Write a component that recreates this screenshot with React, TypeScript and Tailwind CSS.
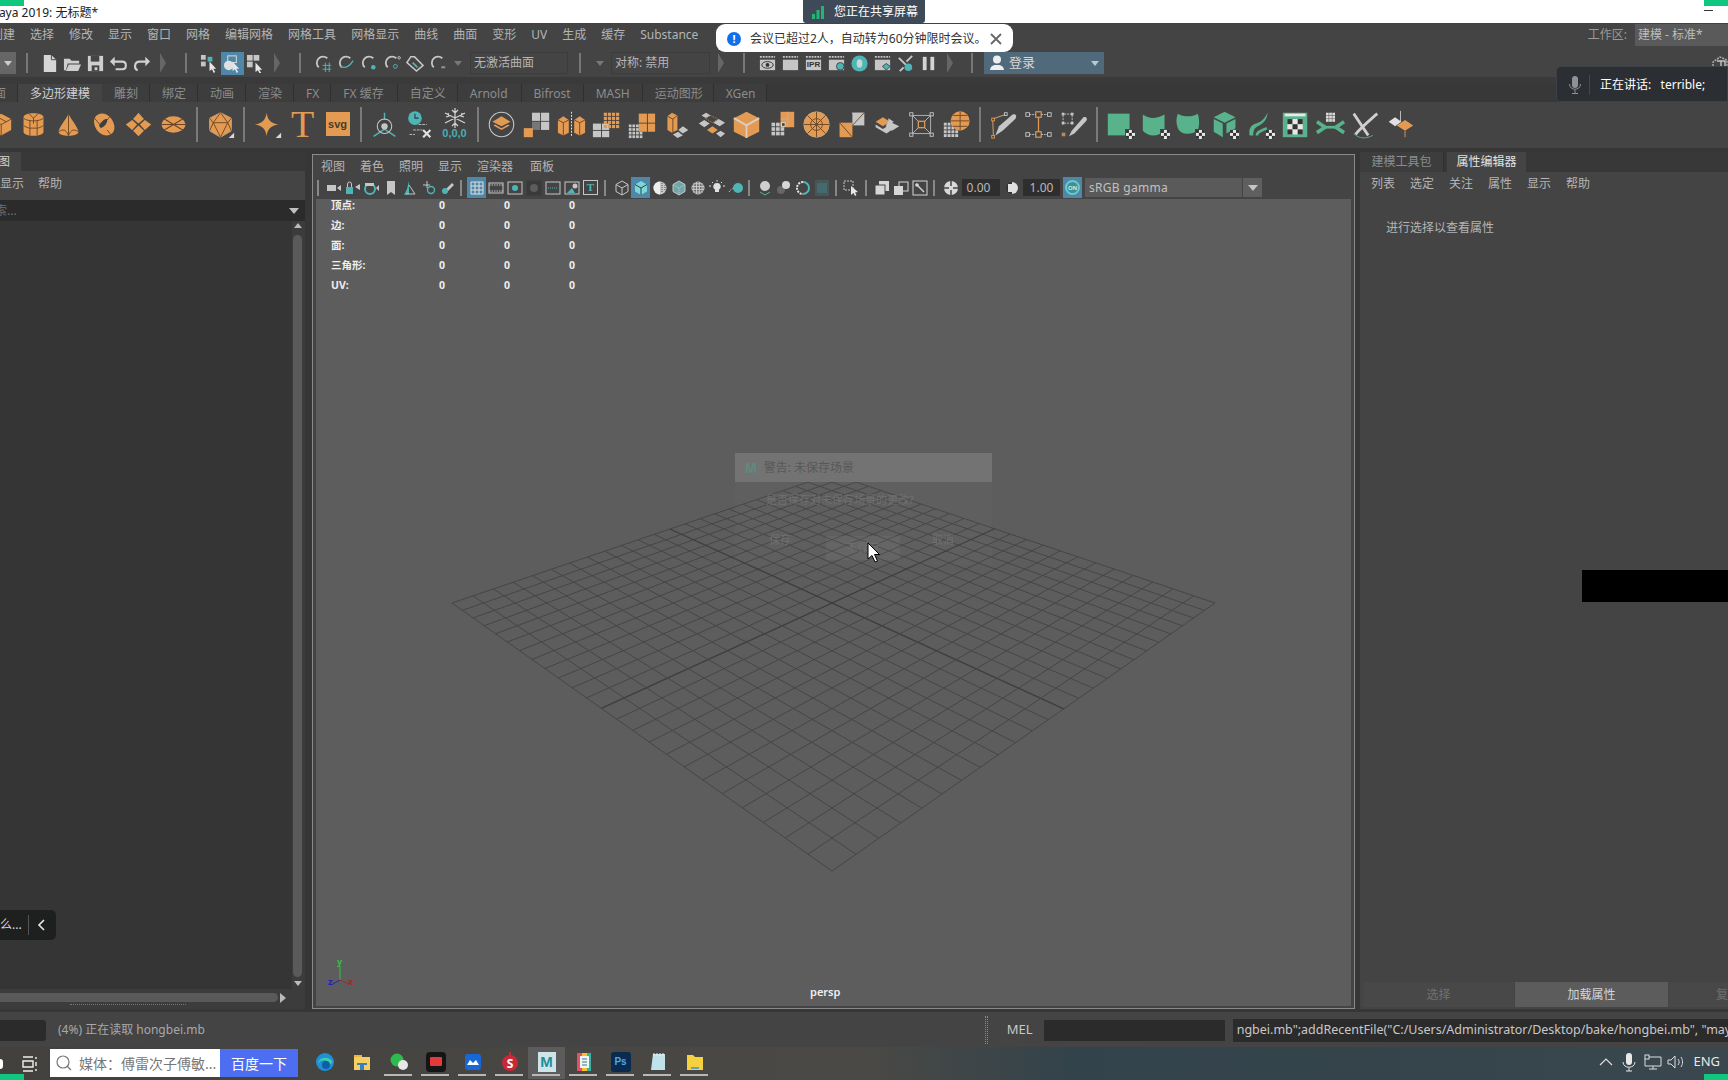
import React from "react";

const O = "#e39a52";
const D = "#6b4423";
const G = "#c6c6c6";
const T = "#4fb4b6";
const N = "#58b28c";

type P = { children?: React.ReactNode; s?: number };
const S = ({ children, s = 29 }: P) => (
  <svg width={s} height={s} viewBox="0 0 32 32" className="block">
    {children}
  </svg>
);
const Corner = () => <polygon points="31,31 31,25 25,31" fill="#d8d8d8" />;
const Chk = ({ x = 22, y = 22 }: { x?: number; y?: number }) => (
  <g>
    <rect x={x} y={y} width="10" height="10" fill="#e8e8e8" />
    <rect x={x} y={y} width="3.3" height="3.3" fill="#333" />
    <rect x={x + 6.6} y={y} width="3.3" height="3.3" fill="#333" />
    <rect x={x + 3.3} y={y + 3.3} width="3.3" height="3.3" fill="#333" />
    <rect x={x} y={y + 6.6} width="3.3" height="3.3" fill="#333" />
    <rect x={x + 6.6} y={y + 6.6} width="3.3" height="3.3" fill="#333" />
  </g>
);
const DGrid = ({ x, y, n, c, size = 3, gap = 1 }: { x: number; y: number; n: number; c: string; size?: number; gap?: number }) => (
  <g fill={c}>
    {Array.from({ length: n * n }).map((_, i) => (
      <rect key={i} x={x + (i % n) * (size + gap)} y={y + Math.floor(i / n) * (size + gap)} width={size} height={size} />
    ))}
  </g>
);

const shelfA: React.ReactNode[] = [
  <S key="cube"><polygon points="19,4 30,10 30,22 19,28 8,22 8,10" fill={O} /><path d="M8 10l11 6 11-6M19 16v12M13.5 7l11 6M13 13v12" stroke={D} strokeWidth="1" fill="none" /></S>,
  <S key="cyl"><path d="M5 8c0-6 22-6 22 0v16c0 6-22 6-22 0z" fill={O} /><path d="M5 9c4 4 18 4 22 0M11 4l5 5 5-5M16 9v6M5 17c4 3 7 3 7 3v8M27 17c-4 3-7 3-7 3v8M12 11v9M20 11v9M12 20h8" stroke={D} strokeWidth="1" fill="none" /></S>,
  <S key="cone"><path d="M16 4C12 12 6 18 5 24c0 6 22 6 22 0-1-6-7-12-11-20z" fill={O} /><path d="M16 4v24M5 24c5-3 8-3 11 4 3-7 6-7 11-4" stroke={D} strokeWidth="1" fill="none" /></S>,
  <S key="torus"><path d="M10 5c8-4 17 4 18 13 1 9-8 13-15 8C6 22 2 9 10 5z" fill={O} /><path d="M11 17c3-5 7-8 9-7 1 5-4 9-7 10z" fill="#3f3f3f" /><path d="M6 9l6 7M20 22l4 5M24 6l-4 5" stroke={D} strokeWidth="1" /></S>,
  <S key="plane"><polygon points="16,3 22,10 16,15 10,10" fill={O} /><polygon points="23,11 30,16 23,22 17.5,16" fill={O} /><polygon points="9,11 14.5,16 9,22 2,16" fill={O} /><polygon points="16,17 22,23 16,29 10,23" fill={O} /></S>,
  <S key="disk"><ellipse cx="16" cy="16" rx="13" ry="9" fill={O} /><path d="M6 10l20 12M26 10L6 22M3 16h26" stroke={D} strokeWidth="1.2" /></S>,
];
const shelfB = (
  <S key="plat"><polygon points="16,3 28,9 28,23 16,30 4,23 4,9" fill={O} stroke="#caa27a" strokeWidth="1" /><path d="M16 3l8 11H8zM4 9l4 5-4 9M28 9l-4 5 4 9M8 14l8 16 8-16" stroke={D} strokeWidth="1" fill="none" /><Corner /></S>
);
const shelfC: React.ReactNode[] = [
  <S key="star"><path d="M15 3c1 8 5 12 13 13-8 1-12 5-13 13-1-8-5-12-13-13 8-1 12-5 13-13z" fill={O} /><Corner /></S>,
  <span key="T" className="[font-family:'Liberation_Serif',serif] text-[38px] leading-none text-[#e39a52]">T</span>,
  <span key="svg" className="flex h-[24px] w-[24px] items-center justify-center bg-[#e39a52] text-[11px] font-bold leading-none text-[#4a3a2a] [font-family:'Liberation_Sans',sans-serif]">svg</span>,
];
const shelfD: React.ReactNode[] = [
  <S key="piv"><path d="M16 3v8M16 21l-12 8M16 21l12 8" stroke={T} strokeWidth="1.6" /><circle cx="16" cy="18" r="8" fill="none" stroke={G} strokeWidth="1.2" /><circle cx="16" cy="18" r="3.5" fill={G} /></S>,
  <S key="clk"><circle cx="11" cy="9" r="7.5" fill={T} /><path d="M11 4v5h4" stroke="#333" strokeWidth="1.2" fill="none" /><path d="M15 16h9M9 22h10M5 27h6" stroke={G} strokeWidth="1" strokeDasharray="3 1" /><path d="M20 22l8 8M28 22l-8 8" stroke="#e0e0e0" strokeWidth="2.4" /></S>,
  <div key="snow" className="relative flex h-[32px] w-[36px] flex-col items-center">
    <svg width="24" height="20" viewBox="0 0 24 20" className="block"><path d="M12 0v20M2 5l20 10M22 5L2 15M9 2l3 3 3-3M9 18l3-3 3 3M3 9l3-1-1-3M21 9l-3-1 1-3" stroke="#d4d4d4" strokeWidth="1.2" fill="none" /></svg>
    <span className="text-[11px] font-bold leading-[11px] text-[#46b0b4] [font-family:'Liberation_Sans',sans-serif]">0,0,0</span>
  </div>,
];
const shelfE: React.ReactNode[] = [
  <S key="e1"><circle cx="16" cy="16" r="13.5" fill="none" stroke={G} strokeWidth="1.2" /><polygon points="16,7 26,13 16,18 6,13" fill={O} /><path d="M7 17l9 5 9-5-2-1-7 4-7-4z" fill={O} /></S>,
  <S key="e2"><rect x="11" y="3" width="9" height="9" fill={G} /><rect x="21" y="3" width="9" height="9" fill={G} /><rect x="21" y="13" width="9" height="9" fill={G} /><rect x="11" y="13" width="9" height="9" fill="#777" /><rect x="2" y="20" width="10" height="10" fill={O} /></S>,
  <S key="e3"><path d="M1 11l6-4 6 4v14l-6 3-6-3z" fill={O} /><path d="M19 11l6-4 6 4v14l-6 3-6-3z" fill={O} /><path d="M1 11l6 3 6-3M7 14v14M19 11l6 3 6-3M25 14v14" stroke={D} strokeWidth="1" fill="none" /><path d="M16 2v28" stroke="#dff" strokeWidth="1" strokeDasharray="2 1.5" /></S>,
  <S key="e4"><rect x="1" y="15" width="9" height="7" fill={G} /><rect x="11" y="15" width="8" height="7" fill={G} /><rect x="1" y="23" width="9" height="7" fill={G} /><rect x="11" y="23" width="8" height="7" fill={G} /><DGrid x={13} y={3} n={4} c={O} size={3.5} gap={1} /></S>,
  <S key="e5"><DGrid x={2} y={16} n={4} c={G} size={3} gap={1} /><rect x="13" y="4" width="9" height="10" fill={O} /><rect x="23" y="4" width="8" height="10" fill={O} /><rect x="23" y="15" width="8" height="9" fill={O} /><rect x="13" y="15" width="9" height="9" fill={O} /></S>,
  <S key="e6"><path d="M6 7l5-4 6 3v16l-6 3-5-3z" fill={O} /><path d="M6 7l6 3 5-4M12 10v15" stroke={D} strokeWidth="1" fill="none" /><polygon points="18,22 23,18 29,22 23,26" fill={G} /><polygon points="12,27 18,24 23,28 17,31" fill={G} /></S>,
  <S key="e7"><polygon points="5,6 10,3 15,6 10,9" fill={G} /><polygon points="18,14 24,10 31,14 25,18" fill={G} /><polygon points="2,15 8,11 14,15 8,19" fill={G} /><polygon points="11,22 17,18 23,22 17,26" fill={O} /><polygon points="21,26 26,23 31,26 26,30" fill={G} /><polygon points="9,9 15,6 23,10 17,14" fill="none" stroke="#a08050" strokeDasharray="2 1" /></S>,
  <S key="e8"><polygon points="16,2 30,9 30,24 16,31 2,24 2,9" fill={O} /><path d="M2 9l14 8 14-8M16 17v14" stroke="#d8d0c4" strokeWidth="2" fill="none" /></S>,
  <S key="e9"><rect x="15" y="2" width="15" height="17" fill={O} /><path d="M15 10h8v-8M23 10v9" stroke="#caa" strokeWidth="1" fill="none" /><DGrid x={5} y={14} n={3} c={G} size={4} gap={1} /><rect x="16" y="14" width="4" height="4" fill="#444" stroke="#ddd" /></S>,
  <S key="e10"><circle cx="16" cy="16" r="14" fill={O} stroke="#cda278" /><circle cx="16" cy="16" r="6.5" fill="none" stroke={D} /><path d="M16 2v28M2 16h28M6 6l20 20M26 6L6 26" stroke={D} strokeWidth="1" /></S>,
  <S key="e11"><polygon points="16,3 30,3 30,17" fill={G} /><polygon points="3,15 15,15 15,29 3,29" fill={O} /><rect x="3" y="14" width="14" height="16" fill={O} /><rect x="17" y="3" width="13" height="14" fill={G} /><path d="M3 14l14 16M17 17l13-14" stroke={D} strokeWidth="1" /></S>,
  <S key="e12"><polygon points="12,8 20,13 12,18 4,13" fill={O} /><polygon points="18,9 24,13 18,17" fill={G} /><polygon points="4,16 12,21 20,16 26,19 16,26 4,19" fill={G} /><polygon points="18,12 30,18 22,23 15,18" fill={G} /></S>,
  <S key="e13"><path d="M5 5l22 22M27 5L5 27M5 6h22M6 5v22M26 5v22M5 26h22" stroke={G} strokeWidth="0.9" /><g fill="#444" stroke={G}><rect x="3" y="3" width="3.5" height="3.5" /><rect x="25.5" y="3" width="3.5" height="3.5" /><rect x="3" y="25.5" width="3.5" height="3.5" /><rect x="25.5" y="25.5" width="3.5" height="3.5" /></g><rect x="12.5" y="12.5" width="7" height="7" fill="#444" stroke={O} strokeWidth="1.4" /></S>,
  <S key="e14"><DGrid x={2} y={14} n={4} c={G} size={3.2} gap={1} /><circle cx="20" cy="12" r="10.5" fill={O} /><path d="M20 2v20M10 12h20M12 6h16M12 18h16" stroke={D} strokeWidth="1" /></S>,
];
const shelfF: React.ReactNode[] = [
  <S key="f1"><path d="M4 10l14-5M4 10l1 20" stroke="#c9975d" strokeWidth="1.2" /><rect x="3" y="9" width="3" height="3" fill="#444" stroke={O} /><rect x="17" y="3" width="3" height="3" fill="#444" stroke={G} /><rect x="3" y="28" width="3" height="3" fill="#444" stroke={O} /><path d="M7 28l4-10L26 5c4-1 5 2 3 5L15 23z" fill={G} /></S>,
  <S key="f2"><g fill="#444" stroke={G}><rect x="2" y="3" width="4" height="4" /><rect x="26" y="3" width="4" height="4" /><rect x="2" y="25" width="4" height="4" /><rect x="26" y="25" width="4" height="4" /></g><rect x="13" y="2" width="6" height="6" fill="#444" stroke={O} strokeWidth="1.3" /><rect x="13" y="24" width="6" height="6" fill="#444" stroke={O} strokeWidth="1.3" /><path d="M16 8v16" stroke={O} strokeWidth="1.4" /><path d="M6 5h7M19 5h7M6 27h7M19 27h7" stroke={G} strokeDasharray="2 1" /></S>,
  <S key="f3"><g fill={G}><rect x="3" y="3" width="3" height="3" /><rect x="13" y="3" width="3" height="3" /><rect x="3" y="13" width="3" height="3" /><rect x="13" y="13" width="3" height="3" /></g><path d="M6 4.5h7M6 14.5h7M4.5 6v7M14.5 6v7" stroke={G} strokeDasharray="2 1" /><rect x="3" y="25" width="4" height="4" fill="#b88a5c" /><path d="M11 29l3-6 13-15c3-1 5 2 3 4L17 26z" fill={G} /></S>,
];
const shelfG: React.ReactNode[] = [
  <S key="g1"><rect x="2" y="4" width="24" height="24" fill={N} /><rect x="21" y="21" width="12" height="11" fill="#3f3f3f" /><Chk /></S>,
  <S key="g2"><path d="M2 5c7 5 15 5 24 0v18c-7 7-18 7-24 0z" fill={N} /><rect x="21" y="21" width="12" height="11" fill="#3f3f3f" /><Chk /></S>,
  <S key="g3"><path d="M2 4c7 4 15 4 22 0 2 6 2 14 0 18-7 6-18 6-22-2-2-6-2-11 0-16z" fill={N} /><rect x="21" y="21" width="12" height="11" fill="#3f3f3f" /><Chk /></S>,
  <S key="g4"><polygon points="15,2 27,8 15,14 3,8" fill={N} /><polygon points="3,10 13,15 13,30 3,24" fill={N} /><polygon points="17,15 27,10 27,20 17,26" fill={N} /><Chk y={22} x={21} /></S>,
  <S key="g5"><path d="M4 28C2 14 12 16 17 12c4-3 5-6 7-9-1 8-5 12-11 15-4 2-5 5-5 10z" fill={N} /><path d="M12 28c0-4 5-5 11-8" stroke={N} strokeWidth="3" fill="none" /><Chk /></S>,
  <S key="g6"><rect x="2" y="3" width="27" height="27" fill={N} /><rect x="4" y="4" width="23" height="3" fill="#e8e8e8" /><g fill="#e8e8e8"><rect x="7" y="10" width="17" height="17" /></g><g fill="#333"><rect x="7" y="10" width="5.6" height="5.6" /><rect x="18.4" y="10" width="5.6" height="5.6" /><rect x="12.7" y="15.7" width="5.6" height="5.6" /><rect x="7" y="21.4" width="5.6" height="5.6" /><rect x="18.4" y="21.4" width="5.6" height="5.6" /></g></S>,
  <S key="g7"><DGrid x={11} y={3} n={3} c="#d8d8d8" size={3} gap={0.5} /><path d="M1 13l9 6-9 6M31 13l-9 6 9 6" stroke={N} strokeWidth="4" fill="none" /><path d="M10 19h12" stroke={N} strokeWidth="3" /></S>,
  <S key="g8"><path d="M3 4l16 24M29 4C20 12 10 20 5 27" stroke="#cfcfcf" strokeWidth="3" /><path d="M3 26c6 6 14 6 21 2" stroke={N} strokeWidth="1" fill="none" /></S>,
  <S key="g9"><path d="M16 1v12" stroke={G} strokeWidth="1" /><polygon points="10,8 17,13 10,18 3,13" fill="#e0e0e0" /><polygon points="21,11 30,17 21,23 12,17" fill={O} /><path d="M21 23v7" stroke={O} /></S>,
];

const Sep = () => <div className="h-[35px] w-[2px] bg-[#7a7a7a]" />;
const Cell = ({ children }: { children: React.ReactNode }) => (
  <div className="flex h-[36px] w-[35px] shrink-0 items-center justify-center">{children}</div>
);
const ShelfSep = () => (
  <div className="flex w-[12px] shrink-0 justify-center"><Sep /></div>
);

// top toolbar
const I = ({ children, active }: { children: React.ReactNode; active?: boolean }) => (
  <div className={active ? "flex h-[23px] w-[23px] shrink-0 items-center justify-center bg-[#4f87a8]" : "flex h-[23px] w-[23px] shrink-0 items-center justify-center"}>
    <svg width="19" height="19" viewBox="0 0 20 20" className="block">{children}</svg>
  </div>
);
const Arrow = ({ x = 10, y = 8 }: { x?: number; y?: number }) => (
  <polygon transform={`translate(${x} ${y})`} points="0,0 0,10 2.5,8 4.5,12 6,11 4,7.5 7,7.5" fill="#e6e6e6" />
);
const Mag = ({ children }: { children?: React.ReactNode }) => (
  <I>
    <path d="M14 4.5A6.5 6.5 0 1 0 5 14" stroke={G} strokeWidth="1.9" fill="none" />
    {children}
  </I>
);
const RBase = ({ children }: { children?: React.ReactNode }) => (
  <g>
    <path d="M2 3h16" stroke={G} strokeWidth="2" strokeDasharray="2 1" />
    <rect x="2" y="6" width="16" height="11" fill={G} />
    {children}
  </g>
);
const TbSep = ({ cls }: { cls: string }) => <div className={cls} />;
const Tri = ({ cls }: { cls: string }) => (
  <svg width="6" height="20" viewBox="0 0 6 20" className={cls}><path d="M0 0l6 10-6 10z" fill="#666" /></svg>
);
const Field = ({ cls, text }: { cls: string; text: string }) => (
  <div className={cls}>{text}</div>
);

const menus = ["创建", "选择", "修改", "显示", "窗口", "网格", "编辑网格", "网格工具", "网格显示", "曲线", "曲面", "变形", "UV", "生成", "缓存", "Substance"];
const tabs: [string, string][] = [
  ["曲面", "pr-[11px]"],
  ["多边形建模", ""],
  ["雕刻", "pr-[11px]"],
  ["绑定", "pr-[11px]"],
  ["动画", "pr-[11px]"],
  ["渲染", "pr-[11px]"],
  ["FX", "pr-[11px]"],
  ["FX 缓存", "pr-[13px]"],
  ["自定义", "pr-[11px]"],
  ["Arnold", "pr-[13px]"],
  ["Bifrost", "pr-[12px]"],
  ["MASH", "pr-[12px]"],
  ["运动图形", "pr-[10px]"],
  ["XGen", "pr-[11px]"],
];

// viewport toolbar
const V = ({ children, active, cls }: { children: React.ReactNode; active?: boolean; cls?: string }) => (
  <div className={(active ? "bg-[#4f87a8] " : "") + "flex h-[21px] w-[19px] shrink-0 items-center justify-center " + (cls ?? "")}>
    <svg width="16" height="16" viewBox="0 0 16 16" className="block">{children}</svg>
  </div>
);
const VSep = ({ cls }: { cls: string }) => <div className={cls} />;

// perspective grid
const quad = { t: [832, 474], r: [1215, 603], b: [832, 871], l: [452, 603] };
function makeMap() {
  const [x0, y0] = quad.t, [x1, y1] = quad.r, [x2, y2] = quad.b, [x3, y3] = quad.l;
  const dx1 = x1 - x2, dx2 = x3 - x2, sx = x0 - x1 + x2 - x3;
  const dy1 = y1 - y2, dy2 = y3 - y2, sy = y0 - y1 + y2 - y3;
  const den = dx1 * dy2 - dx2 * dy1;
  const g = (sx * dy2 - dx2 * sy) / den, h = (dx1 * sy - sx * dy1) / den;
  const a = x1 - x0 + g * x1, b = x3 - x0 + h * x3, d = y1 - y0 + g * y1, e = y3 - y0 + h * y3;
  return (u: number, v: number) => {
    const w = g * u + h * v + 1;
    return [(a * u + b * v + x0) / w, (d * u + e * v + y0) / w];
  };
}
const Grid = () => {
  const m = makeMap();
  const n = 24;
  const lines: React.ReactNode[] = [];
  for (let i = 0; i <= n; i++) {
    const t = i / n;
    const c = i === n / 2;
    const [a1, a2] = m(t, 0), [b1, b2] = m(t, 1), [c1, c2] = m(0, t), [d1, d2] = m(1, t);
    lines.push(<line key={"a" + i} x1={a1} y1={a2} x2={b1} y2={b2} stroke={c ? "#3e3e3e" : "#464646"} strokeWidth={c ? 1.3 : 1} />);
    lines.push(<line key={"b" + i} x1={c1} y1={c2} x2={d1} y2={d2} stroke={c ? "#3e3e3e" : "#464646"} strokeWidth={c ? 1.3 : 1} />);
  }
  return (
    <svg className="absolute left-0 top-0 h-[807px] w-[1035px]" viewBox="316 199 1035 807">
      {lines}
      <line x1="340" y1="980" x2="340" y2="966" stroke="#35c040" />
      <line x1="340" y1="980" x2="331" y2="985" stroke="#2222b8" />
      <line x1="340" y1="980" x2="349" y2="984" stroke="#a82828" />
      <text x="337" y="965" fontSize="9" fill="#35c040" fontWeight="700">y</text>
      <text x="328" y="985" fontSize="9" fill="#2222b8" fontWeight="700">z</text>
      <text x="348" y="985" fontSize="9" fill="#a82828" fontWeight="700">x</text>
    </svg>
  );
};

const hud = [["顶点:"], ["边:"], ["面:"], ["三角形:"], ["UV:"]];

const TaskIcon = ({ children, line = true, active }: { children: React.ReactNode; line?: boolean; active?: boolean }) => (
  <div className={(active ? "bg-[#5c5c5c] " : "") + "relative flex h-[32px] w-[37px] shrink-0 items-center justify-center pb-[3px]"}>
    {children}
    {line && <div className="absolute bottom-[3px] left-[4px] h-[2px] w-[28px] bg-[#b8b8b8]" />}
  </div>
);

export default function App() {
  return (
    <div className="relative flex h-[1080px] w-[1728px] flex-col overflow-hidden bg-[#444444] text-[12px] text-[#b4b4b4] [font-family:'Noto_Sans','Noto_Sans_CJK_SC',sans-serif]">
      {/* title bar */}
      <div className="relative flex h-[23px] shrink-0 items-center bg-white text-[12px] text-[#222]">
        <div className="absolute left-0 top-0 h-[6px] w-[24px] bg-[#0fc77f]" />
        <div className="absolute right-0 top-0 h-[6px] w-[24px] bg-[#0fc77f]" />
        <div className="absolute right-[15px] top-[10px] h-[1px] w-[9px] bg-[#333]" />
        <span className="-ml-[12px] pt-[2px]">Maya 2019: 无标题*</span>
      </div>

      {/* menu bar */}
      <div className="flex h-[29px] shrink-0 items-center bg-[#444444] pb-[7px] pt-[1px]">
        <div className="-ml-[9px] flex gap-[15px] whitespace-nowrap">
          {menus.map((m) => <span key={m}>{m}</span>)}
        </div>
        <div className="ml-auto flex items-center">
          <span className="mr-[8px] text-[#9a9a9a]">工作区:</span>
          <div className="flex h-[22px] w-[93px] items-center bg-[#5a5a5a] pl-[3px] text-[#bcbcbc]">建模 - 标准*</div>
        </div>
      </div>

      {/* main toolbar */}
      <div className="flex h-[25px] shrink-0 items-center bg-[#444444] pb-[3px]">
        <div className="flex h-[22px] w-[16px] items-center justify-center bg-[#666]">
          <div className="h-0 w-0 border-x-[4px] border-t-[5px] border-x-transparent border-t-[#ccc]" />
        </div>
        <TbSep cls="ml-[10px] h-[20px] w-[2px] bg-[#777]" />
        <div className="ml-[10px] flex">
          <I><path d="M4 1h8l5 5v13H4z" fill="#d6d6d6" /><path d="M12 1v5h5" stroke="#444" fill="none" /></I>
          <I><path d="M1 5h6l2 2h8v3H5l-2 7H1z" fill="#cfcfcf" /><path d="M6 11h13l-3 7H3z" fill="#cfcfcf" /></I>
          <I><path d="M2 2h16v16H2z" fill="#cfcfcf" /><rect x="5" y="2" width="9" height="6" fill="#444" /><rect x="6" y="12" width="8" height="6" fill="#444" /><rect x="9" y="14" width="3" height="3" fill="#cfcfcf" /></I>
          <I><path d="M5 8h9c5 0 5 8 0 8H7" stroke="#d0d0d0" strokeWidth="2.2" fill="none" /><path d="M6 3L1 8l5 5z" fill="#d0d0d0" /></I>
          <I><path d="M15 8H8c-6 0-6 8-2 9" stroke="#d0d0d0" strokeWidth="2.2" fill="none" /><path d="M14 3l5 5-5 5z" fill="#d0d0d0" /></I>
        </div>
        <Tri cls="ml-[7px] shrink-0" />
        <TbSep cls="ml-[19px] h-[20px] w-[2px] bg-[#777]" />
        <div className="ml-[11px] flex">
          <I><rect x="1" y="1" width="5" height="5" fill={G} /><rect x="1" y="8" width="5" height="5" fill={G} /><rect x="8" y="3" width="5" height="5" fill={T} /><Arrow /></I>
          <I active><circle cx="6" cy="12" r="5" fill="#e0e0e0" /><rect x="5" y="2" width="9" height="7" fill="none" stroke="#e0e0e0" /><Arrow /></I>
          <I><rect x="1" y="1" width="6" height="6" fill={G} /><rect x="8" y="1" width="6" height="6" fill={G} /><rect x="1" y="8" width="6" height="6" fill={G} /><Arrow x={10} y={9} /></I>
        </div>
        <Tri cls="ml-[7px] shrink-0" />
        <TbSep cls="ml-[19px] h-[20px] w-[2px] bg-[#777]" />
        <div className="ml-[11px] flex">
          <Mag><path d="M9 12h9M9 16h9M12 9v10M16 9v10" stroke={T} strokeWidth="1" /></Mag>
          <Mag><path d="M4 13c5 3 10-1 13-6" stroke={T} strokeWidth="1.4" fill="none" /></Mag>
          <Mag><circle cx="14" cy="14" r="2.4" fill={T} /></Mag>
          <Mag><circle cx="13" cy="13" r="2" fill="none" stroke={T} /><circle cx="17" cy="4" r="1.3" fill="none" stroke={G} /></Mag>
          <I><path d="M5 3L1 9l10 9 7-6-9-9z" fill="none" stroke={G} strokeWidth="1.6" /><path d="M7 9l5 5" stroke={T} strokeWidth="2" /></I>
          <Mag><path d="M13 14l4 0" stroke="#999" strokeWidth="2" /></Mag>
        </div>
        <div className="ml-[4px] h-0 w-0 border-x-[4px] border-t-[5px] border-x-transparent border-t-[#777]" />
        <Field cls="ml-[8px] flex h-[22px] w-[98px] shrink-0 items-center border border-[#3c3c3c] pl-[3px]" text="无激活曲面" />
        <TbSep cls="ml-[11px] h-[20px] w-[2px] bg-[#777]" />
        <div className="ml-[15px] h-0 w-0 shrink-0 border-x-[4px] border-t-[5px] border-x-transparent border-t-[#777]" />
        <Field cls="ml-[7px] flex h-[22px] w-[99px] shrink-0 items-center border border-[#3c3c3c] pl-[3px]" text="对称: 禁用" />
        <Tri cls="ml-[8px] shrink-0" />
        <TbSep cls="ml-[19px] h-[20px] w-[2px] bg-[#777]" />
        <div className="ml-[11px] flex">
          <I><RBase><ellipse cx="10" cy="11.5" rx="6" ry="3.5" fill="none" stroke="#333" /><circle cx="10" cy="11.5" r="2" fill="#333" /></RBase></I>
          <I><RBase /></I>
          <div className="relative flex h-[23px] w-[23px] shrink-0 items-center justify-center">
            <svg width="19" height="19" viewBox="0 0 20 20" className="absolute left-[2px] top-[2px]"><RBase /></svg>
            <span className="relative mt-[3px] text-[8px] font-bold leading-none text-[#333] [font-family:'Liberation_Sans',sans-serif]">IPR</span>
          </div>
          <I><RBase><circle cx="14" cy="13" r="4" fill={T} stroke="#444" /></RBase></I>
          <I><circle cx="10" cy="10" r="8.5" fill={T} /><ellipse cx="10" cy="10" rx="3" ry="4.5" fill="#c9d6d6" /></I>
          <I><RBase><path d="M10 13l4-3 4 3-4 4z" fill={T} stroke="#444" /></RBase></I>
          <I><path d="M3 4l8 8M8 14l-4 4M17 2l-6 6" stroke={G} strokeWidth="2" /><circle cx="13" cy="14" r="4" fill={T} /></I>
          <I><rect x="4" y="3" width="4" height="14" fill="#d4d4d4" /><rect x="12" y="3" width="4" height="14" fill="#d4d4d4" /></I>
        </div>
        <Tri cls="ml-[7px] shrink-0" />
        <TbSep cls="ml-[18px] h-[20px] w-[2px] bg-[#777]" />
        <div className="ml-[11px] flex h-[22px] w-[120px] shrink-0 items-center bg-[#506a7c] pl-[5px] text-[13px] text-[#d8d8d8]">
          <svg width="16" height="16" viewBox="0 0 16 16" className="mr-[4px] block"><circle cx="8" cy="4.5" r="4" fill="#eee" /><path d="M1 15c1-5 4-5 7-5s6 0 7 5z" fill="#eee" /></svg>
          登录
          <div className="ml-auto mr-[5px] h-0 w-0 border-x-[4px] border-t-[5px] border-x-transparent border-t-[#bcc8d0]" />
        </div>
        <svg width="16" height="14" viewBox="0 0 16 14" className="ml-auto block shrink-0">
          <path d="M1 13V6l7-5 7 3v9" stroke="#b0b0b0" strokeWidth="1.4" fill="none" strokeDasharray="2 1" />
          <path d="M5 5h8v8M9 5v8" stroke="#c4c4c4" strokeWidth="1.4" fill="none" />
        </svg>
      </div>

      <div className="h-[7px] shrink-0 bg-[#3a3a3a]" />

      {/* shelf tabs */}
      <div className="flex h-[18px] shrink-0 items-stretch overflow-hidden bg-[#383838] leading-[20px]">
        <div className="-ml-[30px] flex whitespace-nowrap">
          {tabs.map(([t, pr]) => (
            <div key={t} className={t === "多边形建模" ? "bg-[#444444] px-[12px] text-[#d0d0d0]" : "border-r border-[#2f2f2f] bg-[#3d3d3d] pl-[12px] text-[#8c8c8c] " + pr}>{t}</div>
          ))}
        </div>
      </div>

      {/* shelf */}
      <div className="flex h-[46px] shrink-0 items-center overflow-hidden bg-[#444444] pb-[2px]">
        <div className="-ml-[19px] flex items-center">
          {shelfA.map((x, i) => <Cell key={i}>{x}</Cell>)}
          <ShelfSep />
          <Cell>{shelfB}</Cell>
          <ShelfSep />
          {shelfC.map((x, i) => <Cell key={i}>{x}</Cell>)}
          <ShelfSep />
          {shelfD.map((x, i) => <Cell key={i}>{x}</Cell>)}
          <ShelfSep />
          {shelfE.map((x, i) => <Cell key={i}>{x}</Cell>)}
          <ShelfSep />
          {shelfF.map((x, i) => <Cell key={i}>{x}</Cell>)}
          <ShelfSep />
          {shelfG.map((x, i) => <Cell key={i}>{x}</Cell>)}
        </div>
      </div>

      {/* main */}
      <div className="flex h-[864px] shrink-0 bg-[#363636] pb-[3px] pt-[4px]">
        {/* outliner */}
        <div className="relative flex w-[305px] shrink-0 flex-col bg-[#444444]">
          <div className="flex h-[19px] shrink-0 bg-[#383838]">
            <div className="flex w-[21px] items-center overflow-hidden whitespace-nowrap bg-[#444444] text-[#d0d0d0]"><span className="-ml-[14px]">视图</span></div>
          </div>
          <div className="mb-[4px] flex h-[25px] shrink-0 items-center gap-[14px]">
            <span>显示</span>
            <span>帮助</span>
          </div>
          <div className="flex h-[21px] shrink-0 items-center justify-between overflow-hidden whitespace-nowrap bg-[#2b2b2b] pr-[6px] text-[#6e6e6e]">
            <span className="-ml-[17px]">搜索...</span>
            <div className="h-0 w-0 border-x-[5px] border-t-[6px] border-x-transparent border-t-[#c0c0c0]" />
          </div>
          <div className="flex min-h-0 flex-1">
            <div className="flex min-w-0 flex-1 flex-col bg-[#353535]">
              <div className="flex-1" />
              <div className="flex h-[20px] shrink-0 items-start bg-[#3c3c3c] pt-[4px]">
                <div className="h-[9px] w-[278px] rounded-r-full bg-[#5a5a5a]" />
                <div className="ml-[2px] h-0 w-0 border-y-[5px] border-l-[6px] border-y-transparent border-l-[#bbb]" />
              </div>
            </div>
            <div className="flex w-[13px] shrink-0 flex-col items-center bg-[#3c3c3c] pr-[2px] pt-[2px]">
              <div className="h-0 w-0 border-x-[4px] border-b-[5px] border-x-transparent border-b-[#bbb]" />
              <div className="mt-[7px] h-[742px] w-[9px] rounded-full bg-[#5a5a5a]" />
              <div className="mt-[4px] h-0 w-0 border-x-[4px] border-t-[5px] border-x-transparent border-t-[#bbb]" />
            </div>
          </div>
          <div className="absolute left-[70px] top-[852px] h-[1px] w-[116px] border-t border-dotted border-[#777]" />
          {/* floating collapsed widget */}
          <div className="absolute left-0 top-[758px] flex h-[30px] w-[56px] items-center rounded-r-[5px] bg-[#1e2020] text-[#ddd]">
            <span className="w-[28px] overflow-hidden">么...</span>
            <div className="h-[20px] w-[1px] bg-[#555]" />
            <svg width="14" height="14" viewBox="0 0 14 14" className="ml-[6px] block"><path d="M9 2L4 7l5 5" stroke="#e8e8e8" strokeWidth="1.6" fill="none" /></svg>
          </div>
        </div>

        {/* viewport */}
        <div className="ml-[7px] mt-[2px] flex h-[855px] w-[1043px] shrink-0 flex-col border border-[#8a8a8a] bg-[#444444] px-[3px] pb-[1px] pt-[1px]">
          <div className="flex h-[20px] shrink-0 items-center gap-[15px] pl-[5px] pt-[1px]">
            <span>视图</span><span>着色</span><span>照明</span><span>显示</span><span>渲染器</span><span className="ml-[2px]">面板</span>
          </div>
          <div className="flex h-[23px] shrink-0 items-center">
            <VSep cls="ml-[1px] h-[16px] w-[2px] bg-[#888]" />
            <div className="ml-[5px] flex">
              <V><rect x="1" y="5" width="9" height="6" fill={G} /><path d="M11 8l4-3v6z" fill={G} /></V>
              <V><rect x="1" y="7" width="7" height="7" fill={T} /><path d="M2.5 7V4a2 2 0 0 1 4 0v3" stroke={G} fill="none" /><path d="M10 7l5-3v6z" fill={G} /></V>
              <V><circle cx="6" cy="9" r="5" fill="none" stroke={T} strokeWidth="2" /><rect x="1" y="3" width="9" height="3" fill={G} /><path d="M12 8l3-3v6z" fill={G} /></V>
              <V><path d="M4 1h8v14l-4-3-4 3z" fill={G} /></V>
              <V><path d="M7 1v13L2 15l3-6z" fill={T} /><path d="M7 5l6 9H4" stroke={G} fill="none" /></V>
              <V><circle cx="10" cy="10" r="3.5" fill="none" stroke={T} strokeWidth="1.4" /><path d="M6 1v7M2 5h7" stroke={G} /></V>
              <V><path d="M3 12l9-9 2 2-9 9z" fill={G} /><circle cx="5" cy="11" r="3" fill={T} /></V>
            </div>
            <VSep cls="ml-[3px] h-[16px] w-[2px] bg-[#888]" />
            <div className="ml-[5px] flex">
              <V active><path d="M2 2h12v12H2zM6 2v12M10 2v12M2 6h12M2 10h12" stroke="#e0e0e0" fill="none" /></V>
              <V><rect x="1" y="3" width="14" height="10" fill="none" stroke={G} /><path d="M1 5h14M1 11h14" stroke={G} strokeDasharray="1.5 1" /></V>
              <V><rect x="1" y="2" width="14" height="12" fill="none" stroke={G} /><circle cx="8" cy="8" r="3" fill={T} /></V>
              <V><rect x="0.5" y="0.5" width="15" height="15" fill="#3a3a3a" /><circle cx="8" cy="8" r="4" fill="#5c5c5c" /></V>
              <V><rect x="1" y="2" width="14" height="12" fill="none" stroke={G} /><path d="M3 8h10" stroke={T} strokeDasharray="1 1" /></V>
              <V><rect x="1" y="2" width="14" height="12" fill="none" stroke={G} /><path d="M3 13l5-5 3 5z" fill={T} /><circle cx="11" cy="6" r="2.5" fill={G} /></V>
              <div className="flex h-[21px] w-[19px] shrink-0 items-center justify-center">
                <span className="flex h-[15px] w-[15px] items-center justify-center border border-[#c6c6c6] text-[11px] font-bold leading-none text-[#4fb4b6] [font-family:'Liberation_Serif',serif]">T</span>
              </div>
            </div>
            <VSep cls="ml-[4px] h-[16px] w-[2px] bg-[#888]" />
            <div className="ml-[6px] flex">
              <V><path d="M8 1l6 3.5v7L8 15l-6-3.5v-7zM2 4.5L8 8l6-3.5M8 8v7" stroke={G} fill="none" /></V>
              <V active><path d="M8 1l6 3.5v7L8 15l-6-3.5v-7z" fill="#7fd6d8" /><path d="M2 4.5L8 8l6-3.5M8 8v7" stroke="#244" fill="none" /></V>
              <V><circle cx="8" cy="8" r="6.5" fill={G} /><path d="M8 1.5a6.5 6.5 0 0 0 0 13z" fill="#efefef" /><path d="M10 3v10M13 5v6" stroke="#555" strokeDasharray="1 1" /></V>
              <V><path d="M8 1l6 3.5v7L8 15l-6-3.5v-7z" fill="#6ca8aa" stroke={G} /><path d="M2 4.5L8 8l6-3.5M8 8v7" stroke={G} fill="none" strokeDasharray="1 1" /></V>
              <V><circle cx="8" cy="8" r="6.5" fill={G} /><path d="M2 5h12M2 8h12M2 11h12M5 2v12M8 2v12M11 2v12" stroke="#444" strokeDasharray="1.3 1.3" /></V>
              <V><path d="M8 3a3.5 3.5 0 0 1 2 6.5V12H6V9.5A3.5 3.5 0 0 1 8 3z" fill="#e0e0e0" /><path d="M8 0v1.500M2 6H0M16 6h-2M3 2l1 1M13 2l-1 1" stroke="#ddd" /></V>
              <V><circle cx="10" cy="8" r="5" fill={T} /><path d="M1 12c2-3 3-3 5-4" stroke={G} strokeDasharray="1 1" fill="none" /></V>
            </div>
            <VSep cls="ml-[3px] h-[16px] w-[2px] bg-[#888]" />
            <div className="ml-[5px] flex">
              <V><circle cx="8" cy="6" r="5" fill="#cfcfcf" /><path d="M3 12l5 3 5-3" stroke={N} fill="none" /></V>
              <V><circle cx="5" cy="10" r="4" fill="#666" /><circle cx="10" cy="5" r="4" fill="#d6d6d6" /></V>
              <V><path d="M8 2a6 6 0 0 1 0 12" stroke={T} strokeWidth="2" fill="none" /><path d="M8 2a6 6 0 0 0 0 12" stroke="#e0e0e0" strokeWidth="2" fill="none" strokeDasharray="2 1" /></V>
              <V><rect x="1" y="0" width="14" height="16" fill="#4a5656" /><rect x="3" y="3" width="10" height="10" fill="#436a6e" /></V>
            </div>
            <VSep cls="ml-[4px] h-[16px] w-[2px] bg-[#888]" />
            <div className="ml-[4px] flex">
              <V><rect x="1" y="1" width="9" height="9" fill="none" stroke={G} strokeDasharray="2 1" /><polygon points="8,6 8,15 10.5,13 12,16 13.5,15 12,12.5 15,12" fill="#e6e6e6" /></V>
            </div>
            <VSep cls="ml-[5px] h-[16px] w-[2px] bg-[#888]" />
            <div className="ml-[5px] flex">
              <V><rect x="5" y="1" width="10" height="10" fill="#d6d6d6" /><rect x="1" y="5" width="10" height="10" fill="#d6d6d6" stroke="#444" /></V>
              <V><rect x="6" y="2" width="9" height="9" fill="none" stroke="#d6d6d6" /><rect x="1" y="6" width="9" height="9" fill="#d6d6d6" /></V>
              <V><rect x="1" y="1" width="14" height="14" fill="none" stroke="#d6d6d6" /><path d="M4 4l8 8" stroke="#d6d6d6" strokeWidth="1.5" /><circle cx="5" cy="5" r="1.8" fill="#d6d6d6" /></V>
            </div>
            <VSep cls="ml-[4px] h-[16px] w-[2px] bg-[#888]" />
            <div className="ml-[6px] flex">
              <V><circle cx="8" cy="8" r="7" fill="#d8d8d8" /><path d="M8 1v5M15 8h-5M8 15v-5M1 8h5" stroke="#444" strokeWidth="1.5" /></V>
            </div>
            <div className="ml-[2px] flex h-[17px] w-[38px] shrink-0 items-center justify-center bg-[#2e2e2e] pr-[5px] text-[12px] text-[#b8b8b8]">0.00</div>
            <div className="ml-[2px] flex">
              <V><circle cx="8" cy="8" r="6" fill="#333" /><path d="M8 2a6 6 0 0 1 0 12z" fill="#e0e0e0" /><rect x="4" y="4" width="4" height="8" fill="#e0e0e0" /></V>
            </div>
            <div className="ml-[2px] flex h-[17px] w-[37px] shrink-0 items-center justify-center bg-[#2e2e2e] text-[12px] text-[#b8b8b8]">1.00</div>
            <div className="ml-[3px] flex h-[21px] w-[19px] shrink-0 items-center justify-center bg-[#4f87a8]">
              <span className="flex h-[15px] w-[15px] items-center justify-center rounded-full border-2 border-[#6fc8ca] bg-[#3b9396] text-[6px] font-bold leading-none text-[#cdeeee] [font-family:'Liberation_Sans',sans-serif]">ON</span>
            </div>
            <div className="ml-[3px] flex h-[19px] w-[157px] shrink-0 items-center bg-[#5a5a5a] pl-[4px] tracking-[0.3px] text-[#c0c0c0]">sRGB gamma</div>
            <div className="ml-[1px] flex h-[19px] w-[19px] shrink-0 items-center justify-center bg-[#5f5f5f]">
              <div className="h-0 w-0 border-x-[5px] border-t-[6px] border-x-transparent border-t-[#c4c4c4]" />
            </div>
          </div>
          {/* canvas */}
          <div className="relative h-[807px] shrink-0 overflow-hidden bg-[#5d5d5d]">
            <Grid />
            <div className="absolute left-[15px] top-[-4px] grid w-[270px] grid-cols-[108px_65px_65px_29px] text-[10.5px] font-bold leading-[20px] text-[#eeeeee]">
              {hud.map(([h]) => (
                <React.Fragment key={h}>
                  <span>{h}</span>
                  <span>0</span>
                  <span>0</span>
                  <span>0</span>
                </React.Fragment>
              ))}
            </div>
            <div className="absolute left-[494px] top-[785px] text-[11px] font-semibold leading-[16px] text-[#f0f0f0]">persp</div>

            {/* ghost dialog */}
            <div className="absolute left-[419px] top-[254px] w-[257px] text-[#6f6f6f]">
              <div className="flex h-[29px] items-center bg-[#767676]/90 pl-[10px] text-[#585858]">
                <span className="mr-[7px] text-[14px] font-bold leading-none text-[#5f8a80] [font-family:'Liberation_Sans',sans-serif]">M</span>
                警告: 未保存场景
              </div>
              <div className="relative h-[83px] bg-white/[0.015] text-[11px]">
                <div className="pl-[31px] pt-[10px]">是否保存对未保存场景的更改?</div>
                <div className="absolute bottom-[17px] left-[34px]">保存</div>
                <div className="absolute bottom-[5px] left-[91px] flex h-[24px] w-[74px] items-center justify-center bg-white/[0.04]">不保存</div>
                <div className="absolute bottom-[17px] left-[197px]">取消</div>
              </div>
            </div>
            {/* cursor */}
            <svg className="absolute left-[551px] top-[343px]" width="14" height="22" viewBox="0 0 14 22">
              <polygon points="1,1 1,17 5,13.5 8,20 10.5,19 7.5,12.5 12.5,12.5" fill="#fff" stroke="#000" strokeWidth="1" />
            </svg>
          </div>
        </div>

        {/* attribute editor */}
        <div className="ml-[5px] flex min-w-0 flex-1 flex-col bg-[#444444]">
          <div className="flex h-[20px] shrink-0 bg-[#383838]">
            <div className="flex w-[84px] items-center justify-center border-r border-[#2f2f2f] bg-[#3d3d3d] text-[#8c8c8c]">建模工具包</div>
            <div className="ml-[3px] flex w-[79px] items-center justify-center bg-[#444444] text-[#e2e2e2]">属性编辑器</div>
          </div>
          <div className="flex h-[24px] shrink-0 items-center gap-[15px] pl-[11px]">
            <span>列表</span><span>选定</span><span>关注</span><span>属性</span><span>显示</span><span>帮助</span>
          </div>
          <div className="pl-[26px] pt-[23px] leading-[18px]">进行选择以查看属性</div>
          <div className="mb-[2px] mt-auto flex h-[25px] gap-[1px] pl-[3px]">
            <div className="flex w-[151px] items-center justify-center bg-[#484848] text-[#707070]">选择</div>
            <div className="flex w-[153px] items-center justify-center bg-[#5c5c5c] text-[#d6d6d6]">加载属性</div>
            <div className="flex flex-1 items-center bg-[#484848] pl-[47px] text-[#707070]">复</div>
          </div>
        </div>
      </div>

      {/* status line */}
      <div className="flex h-[35px] shrink-0 items-center bg-[#444444] pt-[1px]">
        <div className="h-[21px] w-[46px] shrink-0 rounded-r-[3px] bg-[#2b2b2b]" />
        <span className="ml-[12px] text-[#a8a8a8]">(4%) 正在读取 hongbei.mb</span>
        <div className="ml-[780px] h-[28px] w-[3px] shrink-0 border-l border-r border-dotted border-[#888]" />
        <span className="ml-[19px] text-[13px] text-[#c8c8c8]">MEL</span>
        <div className="ml-[11px] h-[21px] w-[181px] shrink-0 bg-[#2b2b2b]" />
        <div className="ml-[8px] flex h-[23px] min-w-0 flex-1 items-center overflow-hidden whitespace-nowrap bg-[#2b2b2b] pl-[4px] text-[12.5px] text-[#c8c8c8]">
          ngbei.mb";addRecentFile("C:/Users/Administrator/Desktop/bake/hongbei.mb", "mayaBinary");
        </div>
      </div>

      {/* task bar */}
      <div className="relative flex h-[33px] shrink-0 items-stretch bg-[linear-gradient(90deg,#42413d_0%,#4a4945_50%,#33434b_62%,#36454c_85%,#3a474e_100%)]">
        <div className="absolute bottom-0 left-0 h-[6px] w-[24px] bg-[#0fc77f]" />
        <div className="absolute bottom-0 right-0 h-[6px] w-[24px] bg-[#0fc77f]" />
        <div className="absolute left-0 top-[12px] h-[10px] w-[3px] rounded-r-full bg-white" />
        <div className="ml-[21px] flex w-[18px] shrink-0 items-center justify-center">
          <svg width="18" height="18" viewBox="0 0 18 18" className="block"><path d="M2 2h10M2 16h10M2 6h10v6H2zM15 2v2M15 7v4M15 14v2" stroke="#f0f0f0" strokeWidth="1.4" fill="none" /></svg>
        </div>
        <div className="ml-[11px] mt-[2px] flex h-[28px] w-[170px] shrink-0 items-center bg-white pl-[5px] text-[14px] text-[#777]">
          <svg width="18" height="18" viewBox="0 0 18 18" className="mr-[6px] block shrink-0"><circle cx="8" cy="8" r="6" stroke="#777" strokeWidth="1.2" fill="none" /><path d="M12 12l4 4" stroke="#777" strokeWidth="1.2" /></svg>
          <span className="overflow-hidden whitespace-nowrap">媒体：傅雷次子傅敏...</span>
        </div>
        <div className="mt-[2px] flex h-[28px] w-[78px] shrink-0 items-center justify-center bg-[#4e6ef2] text-[14px] text-white">百度一下</div>
        <div className="ml-[8px] flex">
          <TaskIcon line={false}><svg width="20" height="20" viewBox="0 0 20 20"><circle cx="10" cy="10" r="9" fill="#1f8fd8" /><path d="M3 12c0-6 9-9 14-3 1 3-3 4-5 3 3-5-8-5-9 0z" fill="#3fd0a0" /><circle cx="11" cy="13" r="4" fill="#0d5fa8" /></svg></TaskIcon>
          <TaskIcon line={false}><svg width="20" height="20" viewBox="0 0 20 20"><rect x="2" y="3" width="8" height="4" fill="#e8b93e" /><rect x="2" y="5" width="16" height="13" fill="#f5cf62" /><rect x="8" y="11" width="4" height="7" fill="#3a7fc0" /><rect x="5" y="11" width="10" height="2" fill="#3a7fc0" /></svg></TaskIcon>
          <TaskIcon><svg width="20" height="20" viewBox="0 0 20 20"><circle cx="8" cy="8" r="6.5" fill="#2dbb4e" /><circle cx="14" cy="13" r="5" fill="#e8e8e8" /></svg></TaskIcon>
          <TaskIcon><div className="flex h-[20px] w-[20px] items-center justify-center rounded-[4px] bg-[#151515]"><div className="h-[9px] w-[12px] rounded-[1px] bg-[#e23b3b]" /></div></TaskIcon>
          <TaskIcon><svg width="20" height="20" viewBox="0 0 20 20"><rect x="2" y="2" width="16" height="16" rx="3" fill="#1668d8" /><path d="M4 13l3-5 3 3 3-3 3 5z" fill="#fff" /></svg></TaskIcon>
          <TaskIcon><svg width="20" height="20" viewBox="0 0 20 20"><circle cx="10" cy="11" r="8" fill="#c8283a" /><path d="M10 0v5" stroke="#c8283a" strokeWidth="2" /><text x="10" y="15.5" textAnchor="middle" fontSize="12" fontWeight="700" fill="#fff">S</text></svg></TaskIcon>
          <TaskIcon active><div className="flex h-[20px] w-[18px] items-center justify-center bg-[#cfe4e6] text-[15px] font-bold leading-none text-[#1e8e9a] [font-family:'Liberation_Sans',sans-serif]">M</div></TaskIcon>
          <TaskIcon><svg width="20" height="20" viewBox="0 0 20 20"><rect x="3" y="1" width="14" height="18" fill="#f2c230" /><rect x="3" y="1" width="5" height="18" fill="#e4506a" /><rect x="13" y="1" width="4" height="18" fill="#39b3a0" /><rect x="6" y="4" width="9" height="12" fill="#f4f4f4" /><path d="M8 7h5M8 10h5M8 13h5" stroke="#2a7f88" /></svg></TaskIcon>
          <TaskIcon><div className="flex h-[20px] w-[20px] items-center justify-center rounded-[3px] bg-[#0a2a4e] text-[10px] font-bold leading-none text-[#4ea8e8] [font-family:'Liberation_Sans',sans-serif]">Ps</div></TaskIcon>
          <TaskIcon><svg width="20" height="20" viewBox="0 0 20 20"><path d="M5 2h12v16H3z" fill="#bfe3ea" /><path d="M6 1v3M9 1v3M12 1v3M15 1v3" stroke="#eee" /></svg></TaskIcon>
          <TaskIcon><svg width="20" height="20" viewBox="0 0 20 20"><path d="M2 3h6l2 2h8v13H2z" fill="#f5d13d" /><rect x="6" y="15" width="8" height="2" fill="#6da0a8" /></svg></TaskIcon>
        </div>
        <div className="ml-auto flex items-center pb-[3px] pr-[8px]">
          <svg width="16" height="16" viewBox="0 0 16 16" className="block"><path d="M2 11l6-6 6 6" stroke="#ddd" strokeWidth="1.2" fill="none" /></svg>
          <svg width="16" height="20" viewBox="0 0 16 20" className="ml-[7px] block"><rect x="5" y="1" width="6" height="12" rx="3" fill="#e8e8e8" /><path d="M2 10c0 7 12 7 12 0M8 16v3M5 19h6" stroke="#e8e8e8" fill="none" /></svg>
          <svg width="18" height="16" viewBox="0 0 18 16" className="ml-[7px] block"><path d="M5 3h12v9H1V5M9 12v3M5 15h8" stroke="#ddd" fill="none" /><rect x="1" y="1" width="4" height="4" fill="none" stroke="#ddd" /></svg>
          <svg width="18" height="16" viewBox="0 0 18 16" className="ml-[5px] block"><path d="M1 6h3l4-4v12l-4-4H1z" stroke="#ddd" fill="none" /><path d="M11 5c1.5 2 1.5 4 0 6M14 3c2 3 2 7 0 10" stroke="#ddd" fill="none" /></svg>
          <span className="ml-[8px] text-[13px] text-[#e8e8e8]">ENG</span>
        </div>
      </div>

      {/* overlays */}
      <div className="absolute left-[803px] top-0 flex h-[23px] w-[122px] items-center rounded-b-[3px] bg-[#3e4a58] pl-[8px] text-[12px] text-white">
        <svg width="14" height="14" viewBox="0 0 14 14" className="mr-[9px] block"><rect x="1" y="9" width="3" height="5" fill="#22b573" /><rect x="5.5" y="5" width="3" height="9" fill="#22b573" /><rect x="10" y="1" width="3" height="13" fill="#22b573" /></svg>
        您正在共享屏幕
      </div>
      <div className="absolute left-[716px] top-[24px] flex h-[28px] w-[297px] items-center rounded-[9px] bg-white pl-[11px] pt-[1px] text-[12px] text-[#333]">
        <span className="mr-[9px] flex h-[14px] w-[14px] items-center justify-center rounded-full bg-[#0e71eb] text-[11px] font-bold leading-none text-white">!</span>
        会议已超过2人，自动转为60分钟限时会议。
        <svg width="14" height="14" viewBox="0 0 14 14" className="ml-[2px] block"><path d="M2 2l10 10M12 2L2 12" stroke="#666" strokeWidth="1.8" /></svg>
      </div>
      <div className="absolute left-[1556px] top-[66px] flex h-[36px] w-[172px] items-center rounded-l-[5px] border border-[#3d4145] bg-[#2b2e32] pt-[1px] text-[12px] text-white">
        <svg width="14" height="18" viewBox="0 0 14 18" className="ml-[11px] block"><rect x="4" y="0" width="6" height="12" rx="3" fill="#8e9296" /><path d="M1.5 8c0 7 11 7 11 0M7 14v3M4 17.5h6" stroke="#8e9296" fill="none" /></svg>
        <div className="ml-[7px] h-[20px] w-[1px] bg-[#44484c]" />
        <span className="ml-[10px]">正在讲话:&nbsp;&nbsp;&nbsp;terrible;</span>
      </div>
      <div className="absolute left-[1582px] top-[570px] h-[32px] w-[146px] bg-black" />
    </div>
  );
}
